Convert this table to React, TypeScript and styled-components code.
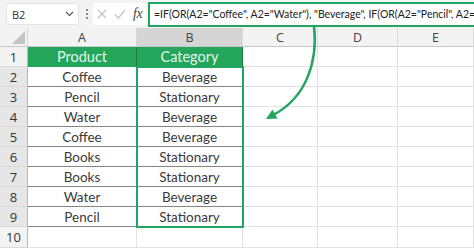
import * as React from 'react';
import styled, { createGlobalStyle } from 'styled-components';

const GlobalStyle = createGlobalStyle`
  html, body {
    margin: 0;
    padding: 0;
    background: #ffffff;
  }
  body {
    font-family: 'Lato', 'Open Sans', sans-serif;
    overflow: hidden;
  }
`;

const green = '#22a463';

const Window = styled.div`
  position: relative;
  width: 474px;
  height: 248px;
  overflow: hidden;
  background: #ffffff;
`;

const FormulaBar = styled.div`
  display: flex;
  align-items: center;
  height: 28px;
  box-sizing: border-box;
  padding-left: 6px;
  background: #f3f3f3;
`;

const NameBox = styled.div`
  display: flex;
  align-items: center;
  justify-content: space-between;
  width: 73px;
  height: 22px;
  box-sizing: border-box;
  padding: 0 4px 0 5px;
  background: #ffffff;
  border: 1px solid #e4e4e4;
  border-radius: 3px;
  font-family: 'Open Sans', sans-serif;
  font-size: 11px;
  color: #333;
`;

const Dots = styled.div`
  display: flex;
  flex-direction: column;
  gap: 2px;
  margin: 0 5px 0 7px;
  span {
    width: 2px;
    height: 2px;
    border-radius: 1px;
    background: #666;
  }
`;

const FxGroup = styled.div`
  display: flex;
  align-items: center;
  gap: 7px;
  width: 53px;
  height: 22px;
  box-sizing: border-box;
  padding: 0 3px 0 4px;
  background: #ffffff;
  border-radius: 3px;
`;

const FxLabel = styled.span`
  font-family: 'Liberation Serif', serif;
  font-style: italic;
  font-size: 14px;
  color: #444;
  letter-spacing: -0.5px;
`;

const FormulaInput = styled.div`
  flex: 1;
  min-width: 0;
  height: 25px;
  margin-left: 2px;
  margin-right: -20px;
  box-sizing: border-box;
  display: flex;
  align-items: center;
  padding-left: 4px;
  border: 2px solid ${green};
  background: #ffffff;
  font-size: 10.5px;
  color: #222;
  white-space: nowrap;
  overflow: hidden;
`;

const Sheet = styled.div`
  display: grid;
  grid-template-columns: 28px 109px 106px 75px 80px 76px;
  grid-template-rows: 19px repeat(9, 20px) 21px;
`;

const Corner = styled.div`
  position: relative;
  background: #f3f3f3;
  border-right: 1px solid #d6d6d6;
  border-bottom: 1px solid #c8c8c8;
  box-sizing: border-box;
  &::after {
    content: '';
    position: absolute;
    right: 2px;
    bottom: 2px;
    border-style: solid;
    border-width: 0 0 13px 13px;
    border-color: transparent transparent #c3c3c3 transparent;
  }
`;

const ColHead = styled.div<{ $selected?: boolean }>`
  display: flex;
  align-items: center;
  justify-content: center;
  box-sizing: border-box;
  background: ${(p) => (p.$selected ? '#d5d5d5' : '#f3f3f3')};
  border-right: 1px solid #dadada;
  border-bottom: 1px solid #c8c8c8;
  font-family: 'Open Sans', sans-serif;
  font-size: 12.5px;
  color: #444;
`;

const RowHead = styled.div<{ $selected?: boolean }>`
  display: flex;
  align-items: center;
  justify-content: center;
  box-sizing: border-box;
  background: ${(p) => (p.$selected ? '#e6e6e6' : '#f3f3f3')};
  border-right: 1px solid #b8b8b8;
  border-bottom: 1px solid #dadada;
  font-family: 'Open Sans', sans-serif;
  font-size: 13px;
  color: #333;
`;

type CellKind = 'head' | 'data' | 'blank';

const Cell = styled.div<{ $kind: CellKind }>`
  display: flex;
  align-items: center;
  justify-content: center;
  box-sizing: border-box;
  font-size: ${(p) => (p.$kind === 'head' ? '14.5px' : '13.5px')};
  background: ${(p) => (p.$kind === 'head' ? '#23a55b' : '#ffffff')};
  color: ${(p) => (p.$kind === 'head' ? '#e4f6ea' : '#3a3a3a')};
  border-right: 1px solid
    ${(p) => (p.$kind === 'head' ? '#1d7a45' : p.$kind === 'data' ? '#858585' : '#e2e2e2')};
  border-bottom: 1px solid
    ${(p) => (p.$kind === 'head' ? '#23a55b' : p.$kind === 'data' ? '#858585' : '#e2e2e2')};
`;

const Selection = styled.div`
  position: absolute;
  left: 136px;
  top: 66px;
  width: 108px;
  height: 162px;
  box-sizing: border-box;
  border: 2px solid ${green};
  pointer-events: none;
`;

const ArrowLayer = styled.svg`
  position: absolute;
  left: 0;
  top: 0;
  pointer-events: none;
`;

const rows: Array<[string, string]> = [
  ['Product', 'Category'],
  ['Coffee', 'Beverage'],
  ['Pencil', 'Stationary'],
  ['Water', 'Beverage'],
  ['Coffee', 'Beverage'],
  ['Books', 'Stationary'],
  ['Books', 'Stationary'],
  ['Water', 'Beverage'],
  ['Pencil', 'Stationary'],
];

const columns = ['A', 'B', 'C', 'D', 'E'];

// only the part of the formula that fits in the bar
const formula = '=IF(OR(A2="Coffee", A2="Water"), "Beverage", IF(OR(A2="Pencil", A2=';

const Chevron = () => (
  <svg width="9" height="6" viewBox="0 0 9 6">
    <path d="M1 1l3.5 3.5L8 1" fill="none" stroke="#555" strokeWidth="1.2" />
  </svg>
);

const CrossIcon = () => (
  <svg width="10" height="10" viewBox="0 0 10 10">
    <path d="M1 1l8 8M9 1l-8 8" stroke="#c4c4c4" strokeWidth="1.3" />
  </svg>
);

const CheckIcon = () => (
  <svg width="12" height="10" viewBox="0 0 12 10">
    <path d="M1 5.5l3.5 3.5L11 1" fill="none" stroke="#c4c4c4" strokeWidth="1.3" />
  </svg>
);

export default function App() {
  return (
    <Window>
      <GlobalStyle />
      <FormulaBar>
        <NameBox>
          <span>B2</span>
          <Chevron />
        </NameBox>
        <Dots>
          <span />
          <span />
          <span />
        </Dots>
        <FxGroup>
          <CrossIcon />
          <CheckIcon />
          <FxLabel>fx</FxLabel>
        </FxGroup>
        <FormulaInput>{formula}</FormulaInput>
      </FormulaBar>
      <Sheet>
        <Corner />
        {columns.map((c) => (
          <ColHead key={c} $selected={c === 'B'}>
            {c}
          </ColHead>
        ))}
        {rows.map(([a, b], i) => (
          <React.Fragment key={i}>
            <RowHead $selected={i > 0}>{i + 1}</RowHead>
            <Cell $kind={i === 0 ? 'head' : 'data'}>{a}</Cell>
            <Cell $kind={i === 0 ? 'head' : 'data'}>{b}</Cell>
            <Cell $kind="blank" />
            <Cell $kind="blank" />
            <Cell $kind="blank" />
          </React.Fragment>
        ))}
        <RowHead>10</RowHead>
        {columns.map((c) => (
          <Cell key={c} $kind="blank" />
        ))}
      </Sheet>
      <Selection />
      <ArrowLayer width="474" height="248" viewBox="0 0 474 248">
        <path
          d="M314 26 C318 62, 306 98, 273 115"
          fill="none"
          stroke={green}
          strokeWidth="2.5"
          strokeLinecap="round"
        />
        <polygon points="266,119 272.5,109.5 277.5,118.5" fill={green} />
      </ArrowLayer>
    </Window>
  );
}
